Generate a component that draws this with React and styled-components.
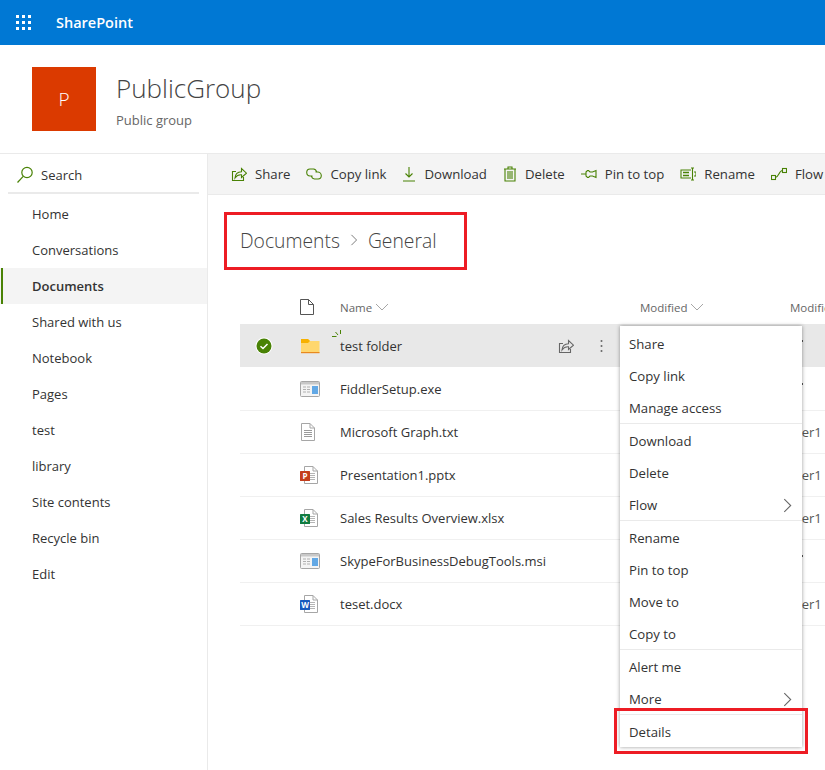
import React from 'react'
import styled, { createGlobalStyle } from 'styled-components'

const GlobalStyle = createGlobalStyle`
  html, body { margin: 0; padding: 0; background: #fff; }
  body { font-family: 'Open Sans', 'Noto Sans', 'Liberation Sans', sans-serif; color: #333; }
  * { box-sizing: border-box; }
`

const Page = styled.div`
  width: 825px;
  height: 770px;
  overflow: hidden;
  display: flex;
  flex-direction: column;
`

const TopBar = styled.header`
  height: 45px;
  flex: none;
  background: #0078d4;
  display: flex;
  align-items: center;
  padding-left: 16px;
  gap: 25px;
`

const Waffle = styled.div`
  display: grid;
  grid-template-columns: repeat(3, 3px);
  grid-auto-rows: 3px;
  gap: 3px;
  span { background: #fff; }
`

const Brand = styled.div`
  color: #fff;
  font-size: 14.5px;
  font-weight: 600;
`

const SiteHeader = styled.div`
  height: 108px;
  flex: none;
  display: flex;
  align-items: center;
  padding-left: 32px;
  gap: 20px;
`

const SiteLogo = styled.div`
  width: 64px;
  height: 64px;
  background: #db3a00;
  color: #fff;
  font-size: 19px;
  font-weight: 300;
  display: flex;
  align-items: center;
  justify-content: center;
`

const SiteInfo = styled.div`
  padding-top: 2px;
`

const SiteTitle = styled.div`
  font-size: 26px;
  font-weight: 300;
  line-height: 36px;
  color: #444;
`

const SiteSub = styled.div`
  font-size: 13px;
  color: #666;
  line-height: 22px;
  margin-top: 3px;
`

const Body = styled.div`
  flex: 1;
  display: flex;
  border-top: 1px solid #eaeaea;
  min-height: 0;
`

const Nav = styled.nav`
  width: 208px;
  flex: none;
  border-right: 1px solid #eaeaea;
`

const SearchRow = styled.div`
  height: 40px;
  margin: 0 8px;
  padding: 3px 0 0 9px;
  display: flex;
  align-items: center;
  gap: 8px;
  border-bottom: 2px solid #eaeaea;
  font-size: 13px;
  color: #333;
`

const NavItem = styled.div`
  height: 36px;
  display: flex;
  align-items: center;
  padding-left: 32px;
  font-size: 13px;
  color: #333;
  position: relative;
  font-weight: ${p => (p.$active ? 600 : 400)};
  background: ${p => (p.$active ? '#f4f4f4' : 'transparent')};
  &::before {
    content: '';
    display: ${p => (p.$active ? 'block' : 'none')};
    position: absolute;
    left: 1px;
    top: 0;
    bottom: 0;
    width: 2px;
    background: #498205;
  }
`

const NavList = styled.div`
  margin-top: 2px;
`

const Main = styled.main`
  flex: 1;
  min-width: 0;
`

const CommandBar = styled.div`
  height: 41px;
  background: #f4f4f4;
  border-bottom: 1px solid #eaeaea;
  display: flex;
  align-items: center;
  padding-left: 23px;
  gap: 16px;
  white-space: nowrap;
  overflow: hidden;
`

const Command = styled.div`
  display: flex;
  align-items: center;
  gap: 8px;
  font-size: 13.2px;
  color: #333;
`

const Breadcrumb = styled.div`
  position: relative;
  height: 58px;
  margin: 17px 0 20px 32px;
  padding-bottom: 2px;
  display: flex;
  align-items: center;
  gap: 8px;
  font-size: 19.3px;
  font-weight: 300;
  color: #444;
`

const RedBox = styled.div`
  position: absolute;
  border: 3px solid #ed1c24;
  pointer-events: none;
`

const BreadcrumbMark = styled(RedBox)`
  left: -16px;
  top: 0;
  width: 243px;
  height: 58px;
`

const DetailsMark = styled(RedBox)`
  left: -6px;
  top: -7px;
  width: 194px;
  height: 46px;
`

const FileList = styled.div`
  position: relative;
  margin-left: 32px;
`

const columns = '60px 40px 300px 146px 1fr'

const HeaderRow = styled.div`
  display: grid;
  grid-template-columns: ${columns};
  height: 34px;
  align-items: center;
  font-size: 11.5px;
  color: #666;
  white-space: nowrap;
`

const HeaderCell = styled.div`
  display: flex;
  align-items: center;
  gap: 3px;
  padding-left: ${p => p.$inset || 0}px;
`

const Row = styled.div`
  display: grid;
  grid-template-columns: ${columns};
  height: ${p => (p.$selected ? 44 : 43)}px;
  padding-top: ${p => (p.$selected ? 1 : 0)}px;
  align-items: center;
  font-size: 13px;
  color: #333;
  white-space: nowrap;
  background: ${p => (p.$selected ? '#e8e8e8' : 'transparent')};
  background-clip: padding-box;
  border-bottom: 1px solid ${p => (p.$selected ? 'transparent' : '#f0f0f0')};
`

const CheckCell = styled.div`
  display: flex;
  justify-content: center;
  width: 48px;
`

const NameCell = styled.div`
  position: relative;
  display: flex;
  align-items: center;
  padding-right: 37px;
`

const FileName = styled.span`
  flex: 1;
`

const RowActions = styled.div`
  display: flex;
  align-items: center;
  gap: 26px;
  color: #666;
`

const NewGlint = styled.svg`
  position: absolute;
  left: -8px;
  top: -7px;
`

const Editor = styled.div`
  font-size: 13px;
  color: #555;
`

// what is left of a longer name behind the open menu
const EditorTick = styled.div`
  width: 1px;
  height: 2px;
  margin: 0 0 10px 16px;
  background: #555;
`

const Menu = styled.div`
  position: absolute;
  left: 380px;
  top: 36px;
  width: 182px;
  padding-top: 1px;
  background: #fff;
  box-shadow: 0 0 4px rgba(0, 0, 0, 0.4);
  z-index: 2;
`

const MenuGroup = styled.div`
  & + & { border-top: 1px solid #eaeaea; }
`

const MenuItem = styled.div`
  position: relative;
  height: 32px;
  display: flex;
  align-items: center;
  justify-content: space-between;
  padding: 2px 7px 0 9px;
  font-size: 13.2px;
  color: #333;
`

const WaffleIcon = () => (
  <Waffle>
    {Array.from({ length: 9 }).map((_, i) => <span key={i} />)}
  </Waffle>
)

const green = '#498205'

const SearchIcon = () => (
  <svg width="16" height="18" viewBox="0 0 16 18" fill="none" stroke={green} strokeWidth="1.2">
    <circle cx="10" cy="6.5" r="5.2" />
    <path d="M6.2 10.3 .5 16.5" />
  </svg>
)

const ShareIcon = ({ color = green }) => (
  <svg width="16" height="16" viewBox="0 0 16 16" fill="none" stroke={color} strokeWidth="1.1">
    <path d="M5 5.5H1.5v9h11v-3.5" />
    <path d="M4 12c.3-4 3-6 6.5-6.2V2.5l5 4.7-5 4.3V8.8C8 8.6 5.500 9.800 4 12z" />
  </svg>
)

const LinkIcon = () => (
  <svg width="16" height="16" viewBox="0 0 16 16" fill="none" stroke={green} strokeWidth="1.1">
    <path d="M6.500 10H4.500a3.500 3.500 0 0 1-.5-7h3.500a3.500 3.500 0 0 1 3 3" />
    <path d="M9.500 6h2a3.500 3.500 0 0 1 .5 7H8.500a3.500 3.500 0 0 1-3-3" />
  </svg>
)

const DownloadIcon = () => (
  <svg width="14" height="16" viewBox="0 0 14 16" fill="none" stroke={green} strokeWidth="1.1">
    <path d="M7 1v10M3.500 7.500 7 11l3.500-3.500M1 15h12" />
  </svg>
)

const TrashIcon = () => (
  <svg width="14" height="16" viewBox="0 0 14 16" fill="none" stroke={green} strokeWidth="1.1">
    <path d="M1 3h12M5 3V1h4v2M2 3v12h10V3" />
    <rect x="4" y="5" width="6" height="8" fill={green} fillOpacity=".55" stroke="none" />
  </svg>
)

const PinIcon = () => (
  <svg width="16" height="14" viewBox="0 0 16 14" fill="none" stroke={green} strokeWidth="1.1">
    <path d="M0 7h5M5 5l1.500-1.500h1L9 5h2.500L15 3.500v7L11.500 9H9l-1.500 1.500h-1L5 9z" />
  </svg>
)

const RenameIcon = () => (
  <svg width="16" height="14" viewBox="0 0 16 14" fill="none" stroke={green} strokeWidth="1.1">
    <path d="M11 3H1v8h10" />
    <path d="M3 5.500h6M3 8.500h6" strokeWidth="1.400" />
    <path d="M11 1h3M11 13h3M12.500 1v12M14 5h2v4h-2" />
  </svg>
)

const FlowIcon = () => (
  <svg width="16" height="14" viewBox="0 0 16 14" fill="none" stroke={green} strokeWidth="1.1">
    <rect x=".5" y="8.500" width="4" height="4" />
    <rect x="11.500" y="1.500" width="4" height="4" />
    <path d="M4.500 10.500c3 0 3.500-7 7-7" />
  </svg>
)

const Chevron = ({ size = 14, color = '#a6a6a6', dir = 'down' }) => (
  <svg width={size} height={size} viewBox="0 0 14 14" fill="none" stroke={color} strokeWidth="1">
    <path d={dir === 'down' ? 'M1 4l6 6 6-6' : 'M4 1l6 6-6 6'} />
  </svg>
)

const BlankDocIcon = () => (
  <svg width="14" height="16" viewBox="0 0 14 16" fill="none" stroke="#555" strokeWidth="1">
    <path d="M.5.500h8l5 5v10H.5zM8.500.500v5h5" />
  </svg>
)

const CheckBadge = () => (
  <svg width="18" height="18" viewBox="0 0 18 18">
    <circle cx="9" cy="9" r="8.500" fill="#fff" />
    <circle cx="9" cy="9" r="7.500" fill="#498205" />
    <path d="M5.500 9.200 8 11.500l4.500-4.500" fill="none" stroke="#fff" strokeWidth="1.500" />
  </svg>
)

const FolderIcon = () => (
  <svg width="20" height="16" viewBox="0 0 20 16">
    <path d="M1 1h7l2 2h9.500v12H1z" fill="#ffd76e" />
    <path d="M1 1h7l2 2-2 2H1z" fill="#f7b100" />
    <rect x="1" y="14" width="18.500" height="1.200" fill="#e8891f" />
  </svg>
)

const AppIcon = () => (
  <svg width="20" height="16" viewBox="0 0 20 16">
    <rect x=".5" y=".5" width="19" height="15" rx="1" fill="#f4f4f4" stroke="#a6a6a6" />
    <rect x="1" y="1" width="18" height="2.500" fill="#c8c8c8" />
    <rect x="12" y="5" width="6" height="8" fill="#62a8e5" />
    <path d="M3 6h3M3 8.500h3M3 11h3M7 6h3M7 8.500h3M7 11h3" stroke="#b0b0b0" />
  </svg>
)

const TextIcon = () => (
  <svg width="16" height="18" viewBox="0 0 16 18" fill="#fff" stroke="#a6a6a6">
    <path d="M1.500.500h8.500l4.500 4.500v12.500h-13z" />
    <path d="M10 .500V5h4.500" fill="none" />
    <path d="M4 7.500h8M4 9.500h8M4 11.500h8M4 13.500h8" stroke="#9a9a9a" />
  </svg>
)

const OfficeIcon = ({ color, letter }) => (
  <svg width="18" height="18" viewBox="0 0 18 18">
    <path d="M4.500.500h8.500l4.500 4.500v12.500h-13z" fill="#fff" stroke="#a6a6a6" />
    <path d="M13 .500V5h4.500" fill="none" stroke="#a6a6a6" />
    <path d="M10 7.500h5M10 9.500h5M10 11.500h5M10 13.500h5" stroke="#b5b5b5" />
    <rect x="0" y="5" width="10" height="10" rx=".5" fill={color} />
    <text x="5" y="13" textAnchor="middle" fontSize="8" fontWeight="700" fill="#fff" fontFamily="'Open Sans', sans-serif">{letter}</text>
  </svg>
)

const Glint = () => (
  <NewGlint width="10" height="8" viewBox="0 0 10 8" fill="none" stroke={green} strokeWidth="1">
    <path d="M0 6.500h4.500M3.500 2 6 5M8.500 0v4" />
  </NewGlint>
)

const Kebab = () => (
  <svg width="3" height="14" viewBox="0 0 3 14" fill="#666">
    <circle cx="1.500" cy="2" r="1" />
    <circle cx="1.500" cy="7" r="1" />
    <circle cx="1.500" cy="12" r="1" />
  </svg>
)

const navItems = ['Home', 'Conversations', 'Documents', 'Shared with us', 'Notebook', 'Pages', 'test', 'library', 'Site contents', 'Recycle bin', 'Edit']

const commands = [
  { label: 'Share', icon: <ShareIcon /> },
  { label: 'Copy link', icon: <LinkIcon /> },
  { label: 'Download', icon: <DownloadIcon /> },
  { label: 'Delete', icon: <TrashIcon /> },
  { label: 'Pin to top', icon: <PinIcon /> },
  { label: 'Rename', icon: <RenameIcon /> },
  { label: 'Flow', icon: <FlowIcon /> },
]

const files = [
  { name: 'FiddlerSetup.exe', icon: <AppIcon />, by: '' },
  { name: 'Microsoft Graph.txt', icon: <TextIcon />, by: 'User1' },
  { name: 'Presentation1.pptx', icon: <OfficeIcon color="#c43e1c" letter="P" />, by: 'User1' },
  { name: 'Sales Results Overview.xlsx', icon: <OfficeIcon color="#107c41" letter="X" />, by: 'User1' },
  { name: 'SkypeForBusinessDebugTools.msi', icon: <AppIcon />, by: '' },
  { name: 'teset.docx', icon: <OfficeIcon color="#185abd" letter="W" />, by: 'User1' },
]

const menuGroups = [
  [{ label: 'Share' }, { label: 'Copy link' }, { label: 'Manage access' }],
  [{ label: 'Download' }, { label: 'Delete' }, { label: 'Flow', more: true }],
  [{ label: 'Rename' }, { label: 'Pin to top' }, { label: 'Move to' }, { label: 'Copy to' }],
  [{ label: 'Alert me' }, { label: 'More', more: true }],
]

export default function App() {
  return (
    <Page>
      <GlobalStyle />
      <TopBar>
        <WaffleIcon />
        <Brand>SharePoint</Brand>
      </TopBar>
      <SiteHeader>
        <SiteLogo>P</SiteLogo>
        <SiteInfo>
          <SiteTitle>PublicGroup</SiteTitle>
          <SiteSub>Public group</SiteSub>
        </SiteInfo>
      </SiteHeader>
      <Body>
        <Nav>
          <SearchRow><SearchIcon />Search</SearchRow>
          <NavList>
            {navItems.map(item => (
              <NavItem key={item} $active={item === 'Documents'}>{item}</NavItem>
            ))}
          </NavList>
        </Nav>
        <Main>
          <CommandBar>
            {commands.map(c => (
              <Command key={c.label}>{c.icon}{c.label}</Command>
            ))}
          </CommandBar>
          <Breadcrumb>
            <span>Documents</span>
            <Chevron size={12} color="#666" dir="right" />
            <span>General</span>
            <BreadcrumbMark />
          </Breadcrumb>
          <FileList>
            <HeaderRow>
              <span />
              <BlankDocIcon />
              <HeaderCell>Name <Chevron size={14} /></HeaderCell>
              <HeaderCell>Modified <Chevron size={14} /></HeaderCell>
              <HeaderCell $inset={4}>Modified By</HeaderCell>
            </HeaderRow>
            <Row $selected>
              <CheckCell><CheckBadge /></CheckCell>
              <FolderIcon />
              <NameCell>
                <Glint />
                <FileName>test folder</FileName>
                <RowActions>
                  <ShareIcon color="#666" />
                  <Kebab />
                </RowActions>
              </NameCell>
              <span />
              <EditorTick />
            </Row>
            {files.map(f => (
              <Row key={f.name}>
                <span />
                {f.icon}
                <NameCell><FileName>{f.name}</FileName></NameCell>
                <span />
                {f.by ? <Editor>{f.by}</Editor> : <EditorTick />}
              </Row>
            ))}
            <Menu>
              {menuGroups.map((group, i) => (
                <MenuGroup key={i}>
                  {group.map(item => (
                    <MenuItem key={item.label}>
                      {item.label}
                      {item.more && <Chevron size={15} color="#666" dir="right" />}
                    </MenuItem>
                  ))}
                </MenuGroup>
              ))}
              <MenuGroup>
                <MenuItem>Details<DetailsMark /></MenuItem>
              </MenuGroup>
            </Menu>
          </FileList>
        </Main>
      </Body>
    </Page>
  )
}
